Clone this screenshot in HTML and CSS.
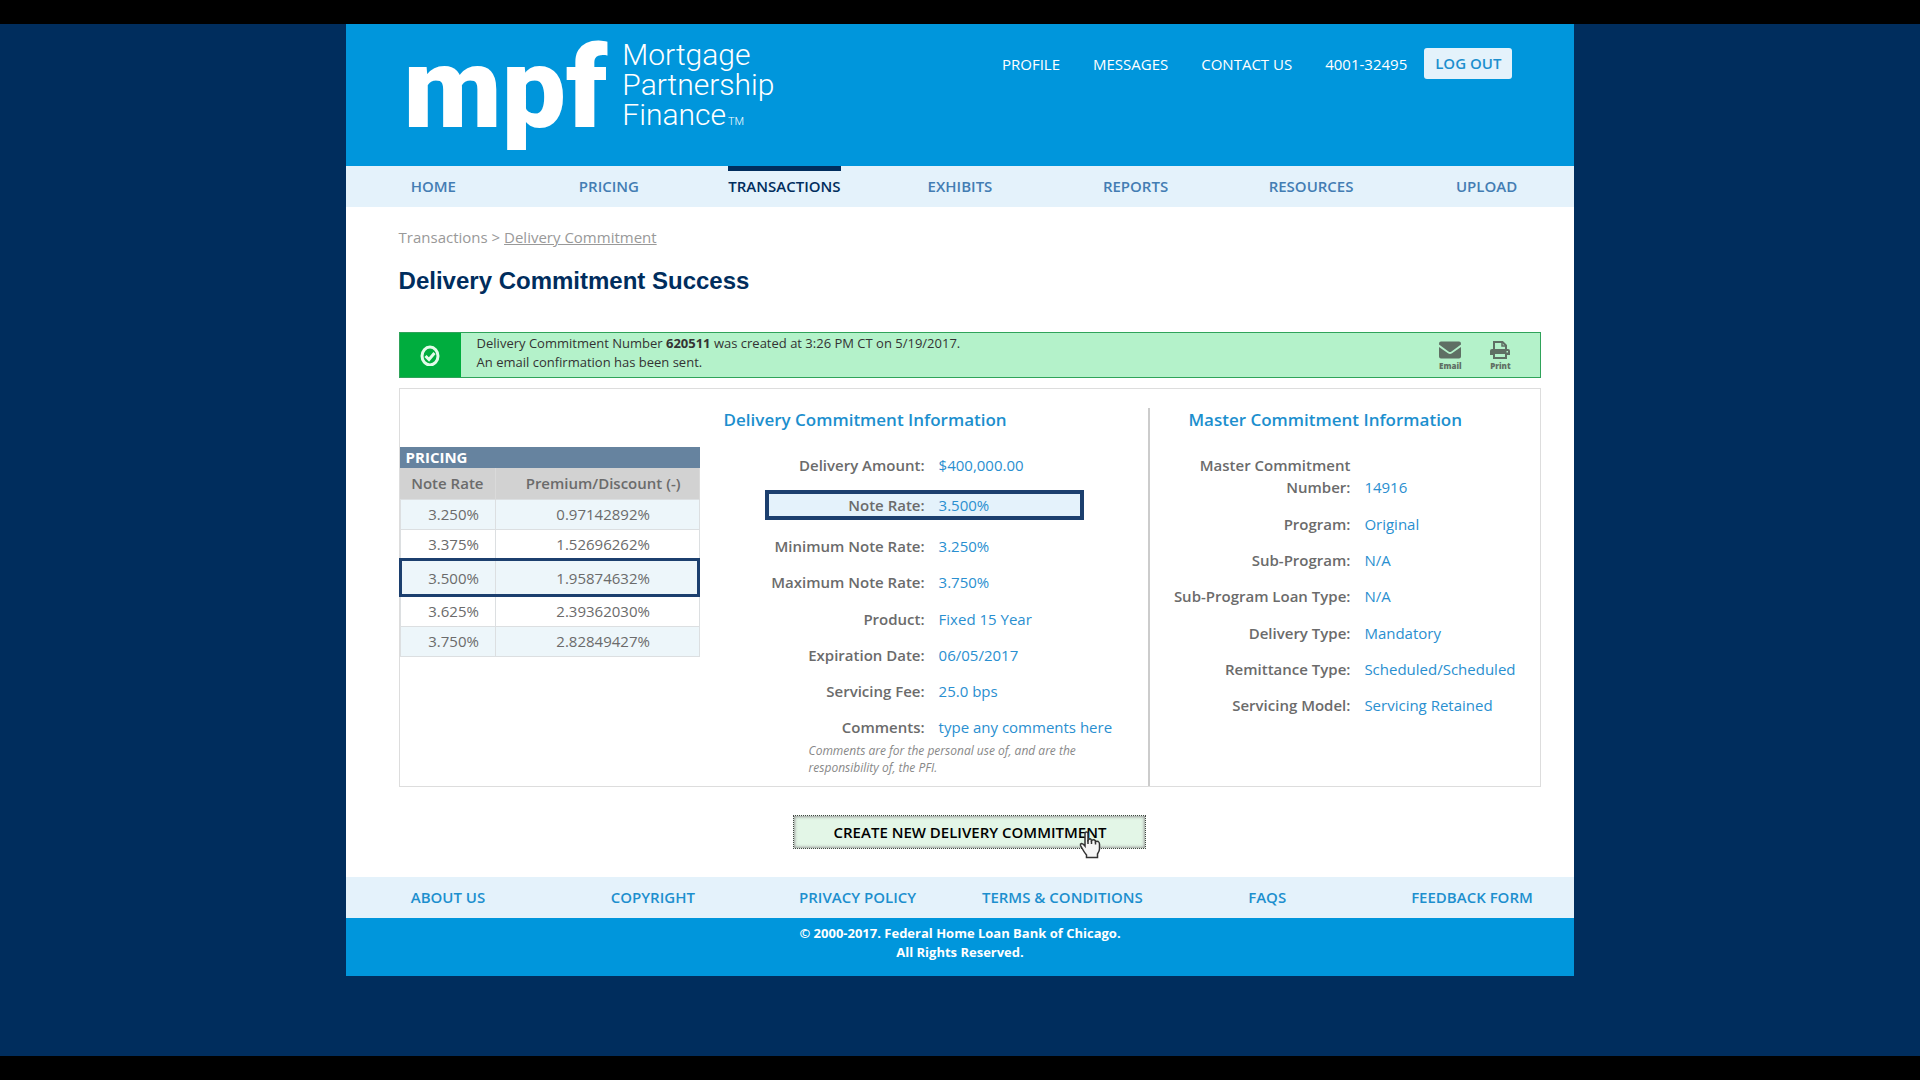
FILE: index.html
```html
<!DOCTYPE html>
<html lang="en">
<head>
  <meta charset="utf-8">
  <title>Delivery Commitment Success</title>
  <link rel="stylesheet" href="styles.css">
</head>
<body>
  <div class="page">
    <header class="header">
      <a class="logo" href="#">
        <span class="logo-mark">mpf</span>
        <span class="logo-name">Mortgage<br>Partnership<br>Finance<small>TM</small></span>
      </a>
      <div class="user-links">
        <a href="#">PROFILE</a>
        <a href="#">MESSAGES</a>
        <a href="#">CONTACT US</a>
        <span>4001-32495</span>
        <button class="logout" type="button">LOG OUT</button>
      </div>
    </header>

    <nav class="main-nav">
      <a href="#">HOME</a>
      <a href="#">PRICING</a>
      <a class="active" href="#">TRANSACTIONS</a>
      <a href="#">EXHIBITS</a>
      <a href="#">REPORTS</a>
      <a href="#">RESOURCES</a>
      <a href="#">UPLOAD</a>
    </nav>

    <main class="content">
      <div class="breadcrumb">Transactions &gt; <a href="#">Delivery Commitment</a></div>
      <h1>Delivery Commitment Success</h1>

      <div class="alert">
        <div class="alert-icon">
          <svg width="20" height="22" viewBox="0 0 20 22">
            <ellipse cx="10" cy="12" rx="8" ry="9" fill="none" stroke="#e4fbea" stroke-width="3"/>
            <path d="M5.5 12 L9 15.5 L14.5 9" fill="none" stroke="#e4fbea" stroke-width="3"/>
          </svg>
        </div>
        <div class="alert-text">
          Delivery Commitment Number <b>620511</b> was created at 3:26 PM CT on 5/19/2017.<br>
          An email confirmation has been sent.
        </div>
        <div class="alert-actions">
          <a href="#">
            <svg width="22" height="18" viewBox="0 0 22 18">
              <path d="M2 0.5 H20 Q22 0.5 22 2.5 V3.5 L12.5 10.5 Q11 11.5 9.5 10.5 L0 3.5 V2.5 Q0 0.5 2 0.5 Z" fill="#5f6f64"/>
              <path d="M0 6 L9 12.3 Q11 13.7 13 12.3 L22 6 V15.5 Q22 17.5 20 17.5 H2 Q0 17.5 0 15.5 Z" fill="#5f6f64"/>
            </svg>
            Email
          </a>
          <a href="#">
            <svg width="20" height="18" viewBox="0 0 20 18">
              <path d="M4 9 V1 H12.5 L16 4.5 V9" fill="none" stroke="#5f6f64" stroke-width="2"/>
              <path d="M12 1 V5 H16" fill="none" stroke="#5f6f64" stroke-width="1.5"/>
              <path d="M2 8 H18 Q20 8 20 10 V14 H0 V10 Q0 8 2 8 Z" fill="#5f6f64"/>
              <rect x="4" y="12" width="12" height="5" fill="#b4f2ca" stroke="#5f6f64" stroke-width="2"/>
              <rect x="16.5" y="10" width="1.5" height="1.5" fill="#b4f2ca"/>
            </svg>
            Print
          </a>
        </div>
      </div>

      <div class="panel">
        <table class="pricing">
          <caption>PRICING</caption>
          <thead>
            <tr><th>Note Rate</th><th>Premium/Discount (-)</th></tr>
          </thead>
          <tbody>
            <tr><td>3.250%</td><td>0.97142892%</td></tr>
            <tr><td>3.375%</td><td>1.52696262%</td></tr>
            <tr class="selected"><td>3.500%</td><td>1.95874632%</td></tr>
            <tr><td>3.625%</td><td>2.39362030%</td></tr>
            <tr><td>3.750%</td><td>2.82849427%</td></tr>
          </tbody>
        </table>

        <section class="delivery">
          <h2>Delivery Commitment Information</h2>
          <dl>
            <div class="row"><dt>Delivery Amount:</dt><dd>$400,000.00</dd></div>
            <div class="row selected"><dt>Note Rate:</dt><dd>3.500%</dd></div>
            <div class="row"><dt>Minimum Note Rate:</dt><dd>3.250%</dd></div>
            <div class="row"><dt>Maximum Note Rate:</dt><dd>3.750%</dd></div>
            <div class="row"><dt>Product:</dt><dd>Fixed 15 Year</dd></div>
            <div class="row"><dt>Expiration Date:</dt><dd>06/05/2017</dd></div>
            <div class="row"><dt>Servicing Fee:</dt><dd>25.0 bps</dd></div>
            <div class="row"><dt>Comments:</dt><dd>type any comments here</dd></div>
          </dl>
          <p class="note">Comments are for the personal use of, and are the responsibility of, the PFI.</p>
        </section>

        <section class="master">
          <h2>Master Commitment Information</h2>
          <dl>
            <div class="row"><dt>Master Commitment Number:</dt><dd>14916</dd></div>
            <div class="row"><dt>Program:</dt><dd>Original</dd></div>
            <div class="row"><dt>Sub-Program:</dt><dd>N/A</dd></div>
            <div class="row"><dt>Sub-Program Loan Type:</dt><dd>N/A</dd></div>
            <div class="row"><dt>Delivery Type:</dt><dd>Mandatory</dd></div>
            <div class="row"><dt>Remittance Type:</dt><dd>Scheduled/Scheduled</dd></div>
            <div class="row"><dt>Servicing Model:</dt><dd>Servicing Retained</dd></div>
          </dl>
        </section>
      </div>

      <div class="actions">
        <button class="create" type="button">CREATE NEW DELIVERY COMMITMENT
          <svg class="pointer" width="22" height="28" viewBox="0 0 22 28">
            <path d="M6 2.5 Q6 1 7.5 1 Q9 1 9 2.5 V9 Q10 7.5 11.5 8 Q12.5 8.5 12.5 9.5 Q14 8.5 15.5 9 Q16.5 9.5 16.5 10.5 Q18 9.8 19.2 10.5 Q20.5 11.5 20.5 13 V18 Q20.5 20 18.5 23 V26.5 H7.5 V24 Q5 21 3.5 18 L1.5 14.5 Q1 13 2.5 12.5 Q4 12.5 6 15 Z" fill="#f6f6f6" stroke="#333" stroke-width="1.5"/>
            <path d="M9 9 V13 M12.5 9.5 V13 M16.5 10.5 V13.5" stroke="#333" stroke-width="1.5"/>
          </svg>
        </button>
      </div>
    </main>

    <nav class="footer-nav">
      <a href="#">ABOUT US</a>
      <a href="#">COPYRIGHT</a>
      <a href="#">PRIVACY POLICY</a>
      <a href="#">TERMS &amp; CONDITIONS</a>
      <a href="#">FAQS</a>
      <a href="#">FEEDBACK FORM</a>
    </nav>
    <footer class="footer">
      © 2000-2017. Federal Home Loan Bank of Chicago.<br>
      All Rights Reserved.
    </footer>
  </div>
</body>
</html>
```
FILE: styles.css
```css
* {
  box-sizing: border-box;
}

body {
  margin: 0;
  min-height: 100vh;
  border-top: 24px solid #000;
  border-bottom: 24px solid #000;
  background: #002d5d;
  font-family: "Open Sans", sans-serif;
  font-size: 15px;
  line-height: 22px;
  color: #6b6b6b;
}

a {
  color: inherit;
  text-decoration: none;
}

button {
  font-family: inherit;
  cursor: pointer;
}

.page {
  width: 64%;
  margin: 0 auto;
  background: #fff;
}

/* header */
.header {
  display: flex;
  justify-content: space-between;
  align-items: flex-start;
  height: 142px;
  padding: 0 62px 0 58px;
  background: #0096dc;
  color: #fff;
}

.logo {
  display: flex;
  align-items: flex-start;
  gap: 15px;
  font-family: Roboto, sans-serif;
}

.logo-mark {
  font-size: 114px;
  line-height: 128px;
  font-weight: 900;
}

.logo-name {
  padding-top: 16px;
  font-size: 30px;
  line-height: 30px;
  font-weight: 300;
}

.logo-name small {
  font-size: 11px;
  margin-left: 2px;
}

.user-links {
  display: flex;
  align-items: center;
  gap: 33px;
  padding-top: 24px;
  line-height: 20px;
}

.logout {
  height: 31px;
  margin-left: -16px;
  padding: 0 11px 2px;
  border: none;
  border-radius: 3px;
  background: #e4f2fb;
  color: #1c8fce;
  font-size: 15px;
  font-weight: 600;
}

/* navigation bars */
.main-nav,
.footer-nav {
  display: grid;
  background: #e4f2fb;
  font-weight: 600;
  text-align: center;
  line-height: 41px;
}

.main-nav {
  grid-template-columns: repeat(7, 1fr);
  justify-items: center;
  color: #437db3;
}

.main-nav a {
  height: 41px;
}

.main-nav .active {
  color: #002d5d;
  box-shadow: inset 0 5px #002d5d;
}

.footer-nav {
  grid-template-columns: repeat(6, 1fr);
  color: #1c8fce;
}

/* content */
.content {
  padding: 19px 33px 28px 53px;
}

.breadcrumb {
  color: #999;
}

.breadcrumb a {
  text-decoration: underline;
}

h1 {
  margin: 18px 0 36px;
  font-family: "Liberation Sans", Arial, sans-serif;
  font-size: 24px;
  line-height: 30px;
  color: #002d5d;
}

.alert {
  display: flex;
  height: 46px;
  border: 1px solid #2fa35a;
  background: #b4f2ca;
  color: #333;
  font-size: 13px;
  line-height: 19px;
}

.alert-icon {
  display: flex;
  align-items: center;
  justify-content: center;
  width: 61px;
  background: #00ad3e;
}

.alert-text {
  flex: 1;
  padding: 1px 16px;
}

.alert-actions {
  display: flex;
  gap: 26px;
  padding: 8px 28px 0 0;
}

.alert-actions a {
  display: flex;
  flex-direction: column;
  align-items: center;
  width: 24px;
  color: #5f6f64;
  font-size: 8px;
  line-height: 14px;
  font-weight: 800;
}

.panel {
  display: grid;
  grid-template-columns: 300px 1fr 392px;
  margin-top: 10px;
  border: 1px solid #ddd;
}

/* pricing table */
.pricing {
  align-self: start;
  width: 100%;
  margin-top: 58px;
  border-collapse: collapse;
  text-align: center;
}

.pricing caption {
  padding: 0 6px;
  background: #66839f;
  color: #fff;
  font-weight: 700;
  line-height: 21px;
  text-align: left;
}

.pricing th {
  height: 31px;
  padding: 0;
  background: #d2d2d2;
  border-right: 1px solid #dadada;
  font-weight: 600;
}

.pricing td {
  height: 30px;
  padding: 0;
  border: 1px solid #dcdfe1;
}

.pricing th:first-child {
  width: 95px;
}

.pricing td:first-child,
.pricing th:last-child,
.pricing td:last-child {
  padding-left: 12px;
}

.pricing tbody tr:nth-child(odd) {
  background: #edf6fa;
}

.pricing .selected {
  outline: 3px solid #1c3f6e;
  outline-offset: -2px;
}

.pricing .selected td {
  height: 37px;
}

/* commitment details */
h2 {
  margin: 0;
  font-size: 17px;
  line-height: 24px;
  font-weight: 600;
  color: #1c8fce;
}

dl {
  margin: 0;
}

.row {
  display: flex;
  align-items: flex-end;
  gap: 14px;
  margin-bottom: 14px;
}

.row dt {
  font-weight: 600;
  text-align: right;
}

.row dd {
  margin: 0;
  color: #2a8fd0;
}

.delivery,
.master {
  margin-top: 19px;
}

.delivery h2 {
  padding-left: 24px;
}

.delivery dl {
  margin: 22px 0 0 65px;
}

.delivery dt {
  width: 160px;
}

.delivery .selected {
  width: 319px;
  border: 4px solid #1c3f6e;
  background: #e4f2fb;
}

.delivery .selected dt {
  width: 156px;
}

.delivery .row:nth-child(-2n+4),
.master .row:nth-child(3n+1) {
  margin-bottom: 15px;
}

.note {
  margin: -10px 60px 10px 109px;
  font-size: 12px;
  line-height: 17px;
  font-style: italic;
  color: #888;
}

.master {
  border-left: 2px solid #ccc;
}

.master h2 {
  padding-left: 38px;
}

.master dl {
  margin-top: 22px;
}

.master dt {
  width: 200px;
}

.actions {
  margin-top: 28px;
  text-align: center;
}

.create {
  position: relative;
  width: 353px;
  height: 34px;
  padding: 0;
  border: 1px dotted #444;
  background: #e3f6e7;
  box-shadow: inset 0 0 3px 1px #999;
  font-size: 15px;
  font-weight: 600;
  color: #000;
}

.pointer {
  position: absolute;
  right: 44px;
  top: 15px;
}

/* footer */
.footer {
  padding: 6px 0 14px;
  background: #0096dc;
  color: #fff;
  font-size: 13px;
  line-height: 19px;
  font-weight: 700;
  text-align: center;
}
```
